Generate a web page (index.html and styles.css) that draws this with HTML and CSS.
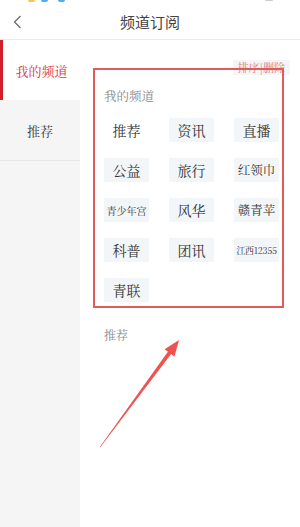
FILE: index.html
```html
<!DOCTYPE html>
<html lang="zh-CN">
<head>
<meta charset="UTF-8" />
<meta name="viewport" content="width=device-width, initial-scale=1.0" />
<title>频道订阅</title>
<link rel="stylesheet" href="styles.css">
</head>
<body>

<div class="status">
  <span class="dot yellow"></span>
  <span class="dot blue"></span>
  <span class="dot blue second"></span>
  <span class="grow"></span>
  <span class="dot grey"></span>
</div>

<header class="topbar">
  <span class="back">
    <svg width="9" height="14" viewBox="0 0 9 14"><path d="M7.5 1 L1.5 7 L7.5 13" fill="none" stroke="#666" stroke-width="1.2"/></svg>
  </span>
  <h1>频道订阅</h1>
</header>

<div class="page">
  <aside class="side">
    <div class="side-item active">我的频道</div>
    <div class="side-item">推荐</div>
  </aside>

  <main class="content">
    <div class="tools">
      <span class="sort">排序|删除</span>
    </div>
    <div class="label">我的频道</div>
    <div class="tags">
      <span class="tag current">推荐</span>
      <span class="tag">资讯</span>
      <span class="tag">直播</span>
      <span class="tag">公益</span>
      <span class="tag">旅行</span>
      <span class="tag three">红领巾</span>
      <span class="tag four">青少年宫</span>
      <span class="tag">风华</span>
      <span class="tag three">赣青苹</span>
      <span class="tag">科普</span>
      <span class="tag">团讯</span>
      <span class="tag five">江西12355</span>
      <span class="tag">青联</span>
    </div>
    <div class="label second">推荐</div>
  </main>
</div>

<!-- annotation drawn over the screenshot -->
<svg class="marks" width="300" height="527" viewBox="0 0 300 527">
  <rect x="94" y="69" width="189" height="238" fill="none" stroke="#e35a5a" stroke-width="2"/>
  <polygon points="99.8,447 100.3,447.2 171.1,354.1 174.5,356.6 179,340 164.6,349.2 167.9,351.7" fill="#f05252"/>
</svg>

</body>
</html>
```
FILE: styles.css
```css
html, body {
  height: 100%;
}
body {
  margin: 0;
  font-family: "Noto Sans CJK SC", "Noto Sans", sans-serif;
  color: #333;
  background: #fff;
  display: flex;
  flex-direction: column;
  position: relative;
  overflow: hidden;
}

.status {
  height: 3px;
  display: flex;
  align-items: flex-start;
  padding: 0 27px 0 28px;
  gap: 6px;
}
.dot {
  width: 7px;
  height: 2px;
  border-radius: 0 0 3px 3px;
}
.dot.yellow { background: #f3c35a; }
.dot.blue { background: #52aee8; }
.dot.second { margin-left: 4px; }
.dot.grey { background: #ccc; height: 1px; width: 8px; }
.grow { flex: 1; }

.topbar {
  height: 36px;
  border-bottom: 1px solid #ececec;
  display: flex;
  align-items: center;
  justify-content: center;
  position: relative;
}
.topbar h1 {
  margin: 0;
  font-size: 15px;
  font-weight: normal;
  color: #444;
}
.back {
  position: absolute;
  left: 13px;
  top: 12px;
  display: flex;
}

.page {
  flex: 1;
  display: flex;
}

.side {
  width: 80px;
  background: #f5f5f5;
}
.side-item {
  height: 60px;
  border-bottom: 1px solid #e6e6e6;
  display: flex;
  align-items: center;
  justify-content: center;
  font-size: 13px;
  color: #333;
  font-family: "Noto Serif CJK SC", "Noto Sans CJK SC", serif;
}
.side-item.active {
  background: #fff;
  color: #d8343c;
  border-left: 3px solid #d0202a;
  border-bottom: none;
  height: 60px;
}

.content {
  flex: 1;
  padding: 20px 10px 0 24px;
}
.tools {
  display: flex;
  justify-content: flex-end;
}
.sort {
  background: #f3f5f8;
  color: #e27b7b;
  font-size: 11px;
  line-height: 15px;
  padding: 0 5px;
  font-family: "Noto Serif CJK SC", "Noto Sans CJK SC", serif;
}
.label {
  margin-top: 13px;
  font-size: 12.5px;
  line-height: 16px;
  color: #8a8a8a;
  font-family: "Noto Serif CJK SC", "Noto Sans CJK SC", serif;
}
.label.second {
  margin-top: 25px;
  font-size: 12px;
}

.tags {
  margin-top: 14px;
  display: grid;
  grid-template-columns: repeat(3, 45px);
  grid-auto-rows: 24px;
  column-gap: 20px;
  row-gap: 16px;
}
.tag {
  background: #f3f6f9;
  display: flex;
  align-items: center;
  justify-content: center;
  font-size: 14px;
  color: #333;
  white-space: nowrap;
  font-family: "Noto Serif CJK SC", "Noto Sans CJK SC", serif;
}
.tag.current { background: #fff; }
.tag.three { font-size: 12.5px; }
.tag.four { font-size: 10px; }
.tag.five { font-size: 9px; letter-spacing: -0.3px; }

.marks {
  position: absolute;
  left: 0;
  top: 0;
  pointer-events: none;
}
```
